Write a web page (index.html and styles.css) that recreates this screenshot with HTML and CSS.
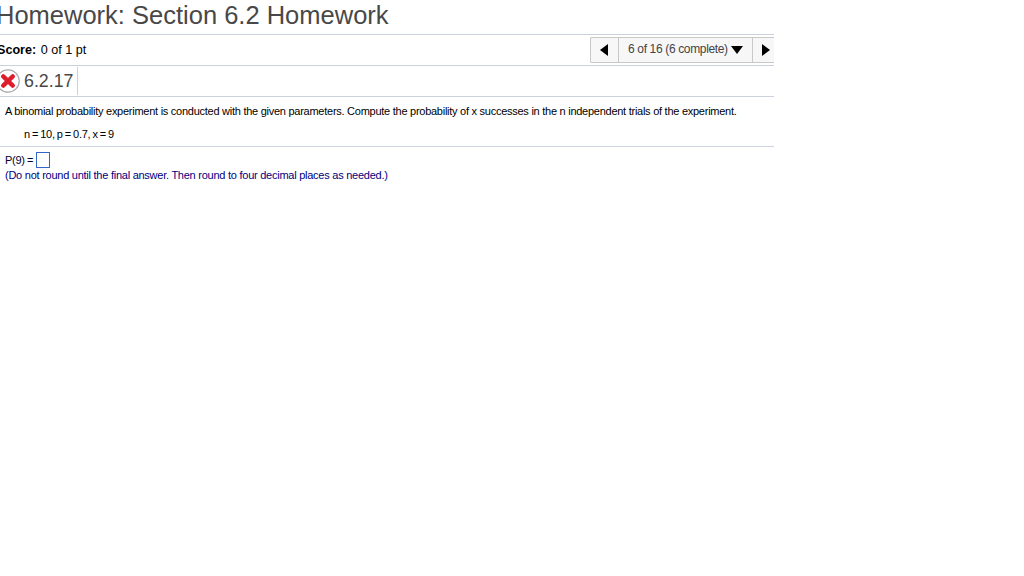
FILE: index.html
```html
<!DOCTYPE html>
<html lang="en">
<head>
<meta charset="utf-8">
<title>Homework: Section 6.2 Homework</title>
<link rel="stylesheet" href="styles.css">
</head>
<body>
<main class="page">
  <header class="title-bar"><h1 class="title">Homework: Section 6.2 Homework</h1></header>
  <section class="score-bar">
    <p class="score"><b class="score-label">Score:</b> <span class="score-value">0 of 1 pt</span></p>
    <nav class="pager">
      <button class="pager-prev" aria-label="Previous"><svg width="8" height="12" viewBox="0 0 8 12"><path d="M8 0V12L0 6Z"/></svg></button>
      <button class="pager-list"><span class="pager-text">6 of 16 (6 complete)</span><svg width="12" height="8" viewBox="0 0 12 8"><path d="M0 0H12L6 8Z"/></svg></button>
      <button class="pager-next" aria-label="Next"><svg width="8" height="12" viewBox="0 0 8 12"><path d="M0 0V12L8 6Z"/></svg></button>
    </nav>
  </section>
  <section class="exercise-bar">
    <div class="exercise">
      <svg class="mark" width="24" height="24" viewBox="0 0 24 24"><circle cx="12" cy="12" r="11.2" fill="#fff" stroke="#aaa" stroke-width="1.2"/><path d="M7.2 7.4L16.8 16.6M16.8 7.4L7.2 16.6" stroke="#dc1f2b" stroke-width="4.4" stroke-linecap="round"/></svg>
      <span class="number">6.2.17</span>
    </div>
  </section>
  <section class="question">
    <p class="prompt">A binomial probability experiment is conducted with the given parameters. Compute the probability of x successes in the n independent trials of the experiment.</p>
    <p class="params">n = 10, p = 0.7, x = 9</p>
  </section>
  <section class="answer">
    <label class="answer-row"><span class="answer-label">P(9) =</span><input class="answer-box" type="text"></label>
    <p class="hint">(Do not round until the final answer. Then round to four decimal places as needed.)</p>
  </section>
</main>
</body>
</html>
```
FILE: styles.css
```css
* { box-sizing: border-box; }
body { margin: 0; background: #fff; font-family: "Liberation Sans", Arial, sans-serif; color: #000; overflow: hidden; }
p, h1 { margin: 0; white-space: nowrap; }
svg { display: block; flex: none; }
.page { width: 774px; overflow: hidden; }
.title-bar { height: 35px; border-bottom: 1px solid #cbd0dd; }
.title { margin-left: -4px; font-size: 25.5px; line-height: 31px; font-weight: 400; color: #484848; }
.score-bar { height: 31px; display: flex; justify-content: space-between; border-bottom: 1px solid #cbd0dd; }
.score { margin-left: -3px; font-size: 12.6px; line-height: 30px; }
.score-label { margin-right: 1px; }
.pager { display: flex; width: 184px; height: 26px; margin-top: 2px; border: 1px solid #c8c8c8; border-right: 0; border-radius: 2px 0 0 2px; background: #f7f7f7; }
.pager button { display: flex; align-items: center; padding: 0; border: 0; background: none; font: 12px "Liberation Sans", Arial, sans-serif; color: #444; }
.pager svg { fill: #000; }
.pager .pager-prev { width: 27px; padding-left: 9px; }
.pager .pager-list { width: 135px; padding-left: 9px; gap: 3px; border: solid #c8c8c8; border-width: 0 1px; white-space: nowrap; }
.pager-text { padding-bottom: 2px; letter-spacing: -0.35px; }
.pager .pager-next { width: 21px; padding-left: 9px; }
.exercise-bar { height: 31px; border-bottom: 1px solid #cbd0dd; padding-top: 1px; }
.exercise { display: flex; align-items: center; width: 78px; height: 28px; border-right: 1px solid #cbd0dd; }
.mark { margin-left: -4px; }
.number { margin-left: 4px; font-size: 17.8px; line-height: 28px; color: #484848; }
.question { height: 50px; padding: 7px 0 0 5px; border-bottom: 1px solid #cbd5e2; font-size: 11px; letter-spacing: -0.26px; }
.prompt { line-height: 14px; }
.params { margin: 9px 0 0 19px; line-height: 14px; word-spacing: -0.7px; }
.answer { padding: 5px 0 0 5px; font-size: 11px; letter-spacing: -0.25px; }
.answer-row { display: flex; height: 16px; }
.answer-label { width: 30px; padding-right: 0; line-height: 17px; white-space: nowrap; word-spacing: -0.7px; color: #000030; }
.answer-box { width: 14px; height: 16px; margin-left: 1px; padding: 0; border: 1px solid #3468c8; background: #fff; }
.hint { line-height: 14px; color: #000080; }
```
